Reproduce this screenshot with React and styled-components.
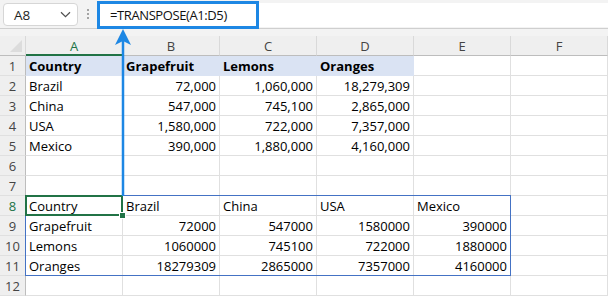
import React from "react";
import styled, { createGlobalStyle } from "styled-components";

const GlobalStyle = createGlobalStyle`
    html, body {
        margin: 0;
        padding: 0;
        background: #f3f3f3;
    }
    body {
        font-family: "Open Sans", "Liberation Sans", sans-serif;
        overflow: hidden;
    }
`;

const Page = styled.div`
    position: relative;
    width: 608px;
    height: 296px;
    overflow: hidden;
    background: #f3f3f3;
`;

const FormulaBar = styled.div`
    height: 28px;
    display: flex;
    align-items: flex-start;
    border-bottom: 1px solid #cfcfcf;
    background: #f3f3f3;
`;

const NameBox = styled.div`
    margin: 3px 0 0 3px;
    width: 75px;
    height: 23px;
    box-sizing: border-box;
    display: flex;
    align-items: center;
    justify-content: space-between;
    padding: 0 6px 0 10px;
    background: #fff;
    border: 1px solid #d6d6d6;
    border-radius: 4px;
    font-size: 13.5px;
    color: #1f1f1f;
`;

const Dots = styled.div`
    width: 19px;
    height: 28px;
    display: flex;
    flex-direction: column;
    align-items: center;
    justify-content: center;
    gap: 2px;

    span {
        width: 2px;
        height: 2px;
        border-radius: 50%;
        background: #8a8a8a;
    }
`;

const FormulaInput = styled.div`
    flex: 1;
    height: 24px;
    margin-top: 3px;
    background: #fff;
    display: flex;
`;

const FormulaHighlight = styled.div`
    width: 162px;
    height: 28px;
    margin-top: -2px;
    box-sizing: border-box;
    border: 3px solid #1d87e4;
    padding-left: 10px;
    display: flex;
    align-items: center;
    font-size: 13px;
    letter-spacing: -0.4px;
    color: #111;
`;

const Spacer = styled.div`
    height: 7px;
`;

const SheetStack = styled.div`
    display: grid;
`;

const Grid = styled.div`
    grid-area: 1 / 1;
    display: grid;
    grid-template-columns: 26px repeat(5, 97px) 1fr;
    grid-auto-rows: 20px;
`;

const Layer = styled(Grid)`
    pointer-events: none;
`;

const Corner = styled.div`
    position: relative;
    background: #efefef;
    border-right: 1px solid #d9d9d9;
    border-bottom: 1px solid #bdbdbd;

    &::after {
        content: "";
        position: absolute;
        right: 3px;
        bottom: 3px;
        border-left: 12px solid transparent;
        border-bottom: 12px solid #dcdcdc;
    }
`;

const ColHead = styled.div`
    display: flex;
    align-items: center;
    justify-content: center;
    background: #efefef;
    border-right: 1px solid #d9d9d9;
    border-bottom: ${(p) => (p.$active ? "2px solid #217346" : "1px solid #bdbdbd")};
    font-size: 13px;
    color: ${(p) => (p.$active ? "#217346" : "#444")};
    padding-top: ${(p) => (p.$active ? "1px" : "0")};
`;

const RowHead = styled.div`
    display: flex;
    align-items: center;
    justify-content: center;
    background: #efefef;
    border-right: 1px solid #bdbdbd;
    border-bottom: 1px solid #e0e0e0;
    font-size: 13px;
    color: ${(p) => (p.$active ? "#217346" : "#444")};
`;

const Cell = styled.div`
    display: flex;
    align-items: center;
    justify-content: ${(p) => (p.$right ? "flex-end" : "flex-start")};
    padding: 0 3px;
    overflow: hidden;
    white-space: nowrap;
    background: ${(p) => (p.$fill ? "#dae3f3" : "#fff")};
    border-right: 1px solid ${(p) => (p.$fill ? "#dae3f3" : "#e0e0e0")};
    border-bottom: 1px solid ${(p) => (p.$fill ? "#dae3f3" : "#e0e0e0")};
    font-size: 13px;
    font-weight: ${(p) => (p.$bold ? 700 : 400)};
    color: #000;
`;

const SpillRange = styled.div`
    grid-row: 9 / 13;
    grid-column: 2 / 7;
    margin: -1px 0 0 -1px;
    border: 1px solid #4472c4;
`;

const Selection = styled.div`
    position: relative;
    grid-row: 9 / 10;
    grid-column: 2 / 3;
    margin: -1px 0 0 -1px;
    border: 2px solid #217346;
`;

const FillHandle = styled.span`
    position: absolute;
    right: -5px;
    bottom: -5px;
    width: 5px;
    height: 5px;
    background: #217346;
    border: 1px solid #fff;
`;

const Arrow = styled.svg`
    position: absolute;
    left: 112px;
    top: 28px;
`;

const COLS = ["A", "B", "C", "D", "E", "F"];

const ROWS = [
    ["Country", "Grapefruit", "Lemons", "Oranges"],
    ["Brazil", "72,000", "1,060,000", "18,279,309"],
    ["China", "547,000", "745,100", "2,865,000"],
    ["USA", "1,580,000", "722,000", "7,357,000"],
    ["Mexico", "390,000", "1,880,000", "4,160,000"],
    [],
    [],
    ["Country", "Brazil", "China", "USA", "Mexico"],
    ["Grapefruit", "72000", "547000", "1580000", "390000"],
    ["Lemons", "1060000", "745100", "722000", "1880000"],
    ["Oranges", "18279309", "2865000", "7357000", "4160000"],
    [],
];

const isNumber = (v) => /^[\d,]+$/.test(v);

const App = () => {
    return (
        <Page>
            <GlobalStyle />
            <FormulaBar>
                <NameBox>
                    A8
                    <svg width="11" height="7" viewBox="0 0 11 7">
                        <path d="M1 1.2 L5.5 5.6 L10 1.2" fill="none" stroke="#505050" strokeWidth="1.2" />
                    </svg>
                </NameBox>
                <Dots>
                    <span />
                    <span />
                    <span />
                </Dots>
                <FormulaInput>
                    <FormulaHighlight>=TRANSPOSE(A1:D5)</FormulaHighlight>
                </FormulaInput>
            </FormulaBar>
            <Spacer />
            <SheetStack>
                <Grid>
                    <Corner />
                    {COLS.map((c) => (
                        <ColHead key={c} $active={c === "A"}>{c}</ColHead>
                    ))}
                    {ROWS.map((row, r) => (
                        <React.Fragment key={r}>
                            <RowHead $active={r === 7}>{r + 1}</RowHead>
                            {COLS.map((c, i) => {
                                const v = row[i] || "";
                                return (
                                    <Cell
                                        key={c}
                                        $right={isNumber(v)}
                                        $bold={r === 0}
                                        $fill={r === 0 && i < 4}
                                    >
                                        {v}
                                    </Cell>
                                );
                            })}
                        </React.Fragment>
                    ))}
                </Grid>
                <Layer>
                    <SpillRange />
                    <Selection>
                        <FillHandle />
                    </Selection>
                </Layer>
            </SheetStack>
            <Arrow width="22" height="170" viewBox="0 0 22 170">
                <line x1="11" y1="12" x2="11" y2="168" stroke="#1d87e4" strokeWidth="2.5" />
                <path d="M11 1 L19 17 L11 13 L3 17 Z" fill="#1d87e4" />
            </Arrow>
        </Page>
    );
};

export default App;
